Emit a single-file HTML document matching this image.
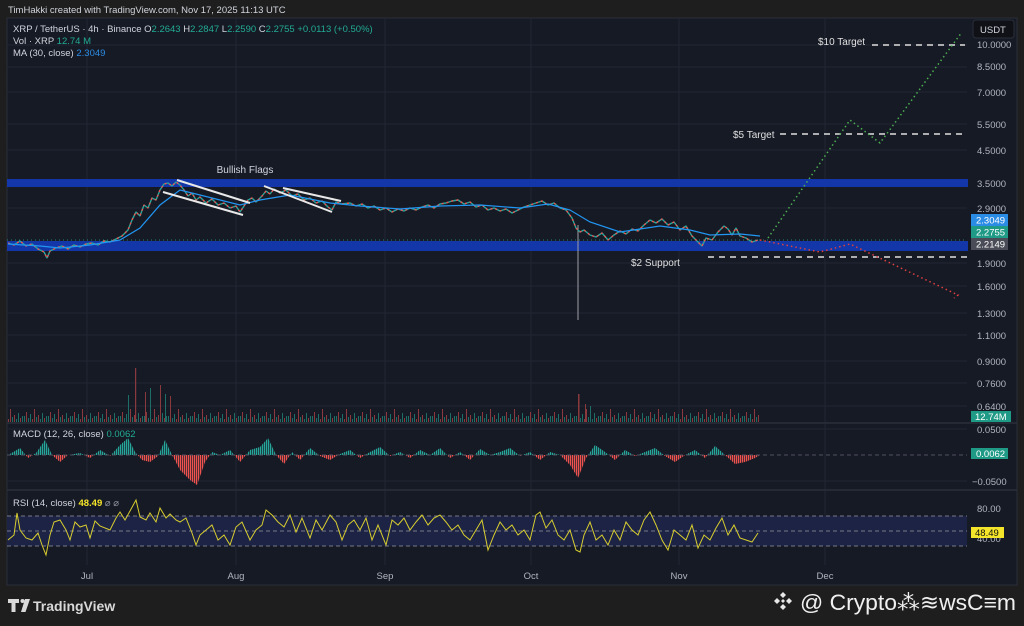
<!DOCTYPE html>
<html><head><meta charset="utf-8"><style>
html,body{margin:0;padding:0;background:#1e1e1e;width:1024px;height:626px;overflow:hidden}
svg{display:block;font-family:"Liberation Sans",sans-serif}
</style></head><body>
<svg width="1024" height="626" viewBox="0 0 1024 626" xmlns="http://www.w3.org/2000/svg">
<defs>
<pattern id="vp" x="0" y="404" width="24" height="18" patternUnits="userSpaceOnUse">
<rect x="0" y="12" width="1" height="6" fill="#1d6e66"/><rect x="2" y="8" width="1" height="10" fill="#8a3a3c"/><rect x="4" y="14" width="1" height="4" fill="#1d6e66"/><rect x="6" y="10" width="1" height="8" fill="#1d6e66"/><rect x="8" y="15" width="1" height="3" fill="#8a3a3c"/><rect x="10" y="5" width="1" height="13" fill="#8a3a3c"/><rect x="12" y="13" width="1" height="5" fill="#1d6e66"/><rect x="14" y="11" width="1" height="7" fill="#8a3a3c"/><rect x="16" y="15" width="1" height="3" fill="#1d6e66"/><rect x="18" y="9" width="1" height="9" fill="#1d6e66"/><rect x="20" y="14" width="1" height="4" fill="#8a3a3c"/><rect x="22" y="12" width="1" height="6" fill="#1d6e66"/>
</pattern>
<pattern id="stripe" x="0" y="0" width="2" height="10" patternUnits="userSpaceOnUse"><rect x="0" y="0" width="1.3" height="10" fill="#fff"/></pattern>
<mask id="sm"><rect x="0" y="420" width="1024" height="80" fill="url(#stripe)"/></mask>
<clipPath id="top"><rect x="0" y="420" width="1024" height="35"/></clipPath>
<clipPath id="bot"><rect x="0" y="455" width="1024" height="40"/></clipPath>
</defs>
<rect x="0" y="0" width="1024" height="626" fill="#1e1e1e"/>
<rect x="7" y="18" width="1010" height="567" fill="#161a25" stroke="#2a2e39" stroke-width="1"/>
<g stroke="#222633" stroke-width="1">
<line x1="87" y1="18" x2="87" y2="565"/><line x1="236" y1="18" x2="236" y2="565"/><line x1="385" y1="18" x2="385" y2="565"/><line x1="531" y1="18" x2="531" y2="565"/><line x1="679" y1="18" x2="679" y2="565"/><line x1="825" y1="18" x2="825" y2="565"/>
<line x1="7" y1="45" x2="967" y2="45"/><line x1="7" y1="67" x2="967" y2="67"/><line x1="7" y1="92" x2="967" y2="92"/><line x1="7" y1="124" x2="967" y2="124"/><line x1="7" y1="150" x2="967" y2="150"/><line x1="7" y1="183" x2="967" y2="183"/><line x1="7" y1="208" x2="967" y2="208"/><line x1="7" y1="263" x2="967" y2="263"/><line x1="7" y1="286" x2="967" y2="286"/><line x1="7" y1="313" x2="967" y2="313"/><line x1="7" y1="335" x2="967" y2="335"/><line x1="7" y1="361" x2="967" y2="361"/><line x1="7" y1="383" x2="967" y2="383"/><line x1="7" y1="406" x2="967" y2="406"/>
<line x1="7" y1="429" x2="967" y2="429"/><line x1="7" y1="481" x2="967" y2="481"/>
</g>
<g stroke="#2a2e39" stroke-width="1.5">
<line x1="7" y1="423" x2="1017" y2="423"/><line x1="7" y1="490" x2="1017" y2="490"/>
</g>
<rect x="7" y="179" width="961" height="8" fill="#1336a8"/>
<rect x="7" y="241" width="961" height="10" fill="#1336a8"/>
<line x1="7" y1="240" x2="967" y2="240" stroke="#26a69a" stroke-width="0.8" stroke-dasharray="1,3"/>
<rect x="8" y="404" width="752" height="18" fill="url(#vp)"/>
<g fill="#8a3a3c"><rect x="135" y="368" width="1.2" height="54"/><rect x="578" y="394" width="1.5" height="28"/><rect x="145" y="392" width="1" height="30"/><rect x="160" y="385" width="1" height="37"/><rect x="585" y="404" width="1" height="18"/><rect x="170" y="396" width="1" height="26"/></g>
<g fill="#1d6e66"><rect x="150" y="388" width="1" height="34"/><rect x="128" y="395" width="1" height="27"/><rect x="590" y="406" width="1" height="16"/><rect x="165" y="394" width="1" height="28"/></g>
<g mask="url(#sm)">
<polygon clip-path="url(#top)" fill="#26a69a" points="8,455 20,448 28,458 36,453 45,440 52,455 60,462 68,455 80,453 90,458 100,450 110,456 120,445 128,438 135,452 142,460 150,462 158,456 165,440 172,455 180,470 190,480 197,485 205,462 212,452 220,455 230,450 240,462 250,450 260,447 268,438 276,455 284,464 292,452 300,460 310,448 320,456 330,460 340,454 350,450 360,458 370,452 380,447 390,456 400,452 410,458 420,450 430,455 440,448 450,458 460,452 470,460 480,449 490,455 500,452 510,448 520,456 530,452 540,460 550,452 560,455 570,465 578,478 586,458 595,445 605,452 615,460 625,450 635,456 645,452 655,448 665,456 675,462 685,455 695,450 705,458 715,446 725,455 735,464 745,462 755,458 760,455"/>
<polygon clip-path="url(#bot)" fill="#ef5350" points="8,455 20,448 28,458 36,453 45,440 52,455 60,462 68,455 80,453 90,458 100,450 110,456 120,445 128,438 135,452 142,460 150,462 158,456 165,440 172,455 180,470 190,480 197,485 205,462 212,452 220,455 230,450 240,462 250,450 260,447 268,438 276,455 284,464 292,452 300,460 310,448 320,456 330,460 340,454 350,450 360,458 370,452 380,447 390,456 400,452 410,458 420,450 430,455 440,448 450,458 460,452 470,460 480,449 490,455 500,452 510,448 520,456 530,452 540,460 550,452 560,455 570,465 578,478 586,458 595,445 605,452 615,460 625,450 635,456 645,452 655,448 665,456 675,462 685,455 695,450 705,458 715,446 725,455 735,464 745,462 755,458 760,455"/>
</g>
<line x1="7" y1="455" x2="967" y2="455" stroke="#50535e" stroke-width="1" stroke-dasharray="4,3"/>
<rect x="7" y="516" width="960" height="30" fill="#1c2344"/>
<g stroke="#787b86" stroke-width="1" stroke-dasharray="4,3" fill="none">
<line x1="7" y1="516" x2="967" y2="516"/><line x1="7" y1="531" x2="967" y2="531"/><line x1="7" y1="546" x2="967" y2="546"/>
</g>
<polyline fill="none" stroke="#d8cd30" stroke-width="1" points="8,540 14,535 17,513 20,530 26,538 32,540 38,533 42,545 46,555 50,535 54,522 60,520 66,530 70,540 75,522 80,527 86,525 90,538 95,521 100,526 110,530 116,518 120,512 125,520 130,511 136,500 140,517 146,520 150,513 156,522 160,508 166,518 170,514 176,520 180,522 186,518 192,533 196,545 200,535 206,530 212,525 218,540 224,535 230,545 236,527 242,522 250,540 256,530 262,525 266,510 272,515 278,522 284,527 290,515 296,532 302,518 310,538 316,520 322,530 330,515 336,522 342,540 348,525 354,520 360,530 366,518 372,540 378,525 386,545 392,520 398,525 404,518 410,530 416,522 422,515 428,525 434,518 440,515 446,522 452,530 458,525 464,535 470,540 476,530 482,520 488,550 494,535 500,522 506,530 512,525 518,535 524,530 530,540 536,515 540,512 546,528 552,520 558,535 564,540 570,530 576,550 580,552 584,535 590,522 596,540 602,535 608,545 614,530 620,540 626,522 632,530 638,535 644,520 650,512 656,525 662,540 668,550 674,530 680,535 686,540 692,525 698,548 704,535 710,540 716,528 722,518 728,535 734,525 740,538 746,540 752,542 758,533"/>
<line x1="578" y1="225" x2="578" y2="320" stroke="#9ea0a8" stroke-width="1"/>
<g fill="none" stroke-width="1.4" stroke-linejoin="bevel">
<polyline stroke="#26a69a" points="8,243 14,245 20,241 26,246 32,244 38,249 44,252 47,258 50,251 56,248 62,246 68,249 74,245 80,247 86,244 92,243 98,245 104,241 110,242 116,239 122,236 128,230 132,220 136,212 140,216 144,205 148,208 152,198 156,200 160,190 164,184 168,183 172,186 176,182 180,185 184,190 188,196 192,193 196,200 200,197 206,203 212,199 218,205 224,203 230,208 236,206 240,212 244,206 248,200 252,198 256,202 262,196 266,191 270,194 274,189 280,193 286,190 292,196 298,194 304,200 310,198 316,203 322,201 328,207 332,210 336,202 342,204 350,203 356,206 362,204 368,208 374,206 380,210 386,208 392,212 398,209 404,211 410,208 416,210 422,207 428,205 434,208 440,204 446,203 452,201 458,200 464,204 470,202 476,207 482,205 488,210 494,208 500,211 506,209 512,213 518,210 524,207 530,205 536,203 542,201 548,205 554,203 560,208 566,210 572,218 576,228 580,232 584,230 590,235 596,237 602,233 608,240 614,235 620,231 626,234 632,229 638,231 644,225 650,220 656,223 662,219 668,225 674,222 680,230 686,226 692,236 698,242 702,246 706,238 712,240 718,232 724,226 728,229 732,235 736,228 740,236 746,238 752,242 758,240"/>
<polyline stroke="#ef5350" stroke-dasharray="2,3" points="8,243 14,245 20,241 26,246 32,244 38,249 44,252 47,258 50,251 56,248 62,246 68,249 74,245 80,247 86,244 92,243 98,245 104,241 110,242 116,239 122,236 128,230 132,220 136,212 140,216 144,205 148,208 152,198 156,200 160,190 164,184 168,183 172,186 176,182 180,185 184,190 188,196 192,193 196,200 200,197 206,203 212,199 218,205 224,203 230,208 236,206 240,212 244,206 248,200 252,198 256,202 262,196 266,191 270,194 274,189 280,193 286,190 292,196 298,194 304,200 310,198 316,203 322,201 328,207 332,210 336,202 342,204 350,203 356,206 362,204 368,208 374,206 380,210 386,208 392,212 398,209 404,211 410,208 416,210 422,207 428,205 434,208 440,204 446,203 452,201 458,200 464,204 470,202 476,207 482,205 488,210 494,208 500,211 506,209 512,213 518,210 524,207 530,205 536,203 542,201 548,205 554,203 560,208 566,210 572,218 576,228 580,232 584,230 590,235 596,237 602,233 608,240 614,235 620,231 626,234 632,229 638,231 644,225 650,220 656,223 662,219 668,225 674,222 680,230 686,226 692,236 698,242 702,246 706,238 712,240 718,232 724,226 728,229 732,235 736,228 740,236 746,238 752,242 758,240"/>
</g>
<polyline fill="none" stroke="#2196f3" stroke-width="1.2" points="8,244 40,246 60,248 90,245 120,240 140,228 160,205 180,190 200,195 240,205 260,200 290,195 330,203 360,206 400,209 440,206 480,205 520,208 548,204 570,210 590,222 620,232 660,226 690,230 710,235 740,234 760,236"/>
<g stroke="#e8e8e8" stroke-width="2">
<line x1="163" y1="192" x2="243" y2="215"/><line x1="177" y1="180" x2="250" y2="203"/>
<line x1="264" y1="186" x2="332" y2="212"/><line x1="283" y1="188" x2="341" y2="201"/>
</g>
<text x="245" y="173" fill="#d1d4dc" font-size="10" text-anchor="middle">Bullish Flags</text>
<g stroke="#e0e0e0" stroke-width="1.5" stroke-dasharray="6,5">
<line x1="872" y1="45" x2="965" y2="45"/><line x1="780" y1="134" x2="965" y2="134"/><line x1="708" y1="257" x2="967" y2="257"/>
</g>
<g fill="#e0e0e0" font-size="10">
<text x="818" y="45">$10 Target</text><text x="733" y="138">$5 Target</text><text x="631" y="266">$2 Support</text>
</g>
<polyline points="768,238 850,120 880,143 962,32" fill="none" stroke="#4caf50" stroke-width="1.5" stroke-dasharray="1.5,3"/>
<polyline points="760,240 820,252 850,244 958,295 954,298" fill="none" stroke="#e04040" stroke-width="1.5" stroke-dasharray="1.5,3"/>
<g fill="#b2b5be" font-size="9.5">
<text x="977" y="48">10.0000</text><text x="977" y="70">8.5000</text><text x="977" y="96">7.0000</text><text x="977" y="128">5.5000</text><text x="977" y="154">4.5000</text><text x="977" y="187">3.5000</text><text x="977" y="212">2.9000</text><text x="977" y="267">1.9000</text><text x="977" y="290">1.6000</text><text x="977" y="317">1.3000</text><text x="977" y="339">1.1000</text><text x="977" y="365">0.9000</text><text x="977" y="387">0.7600</text><text x="977" y="410">0.6400</text>
<text x="977" y="433">0.0500</text><text x="972" y="485">−0.0500</text><text x="977" y="512">80.00</text><text x="977" y="542">40.00</text>
</g>
<rect x="973" y="20" width="41" height="18" rx="3" fill="#0f1117" stroke="#2a2e39"/>
<text x="980" y="33" fill="#d1d4dc" font-size="9.5">USDT</text>
<rect x="971" y="214" width="37" height="12" fill="#2b8ce5"/><text x="976" y="223.5" fill="#fff" font-size="9.5">2.3049</text>
<rect x="971" y="226" width="37" height="12" fill="#1f9a86"/><text x="976" y="235.5" fill="#fff" font-size="9.5">2.2755</text>
<rect x="971" y="238" width="37" height="12" fill="#4a4d57"/><text x="976" y="247.5" fill="#fff" font-size="9.5">2.2149</text>
<rect x="971" y="411" width="40" height="11" fill="#1f9a86"/><text x="975" y="420" fill="#fff" font-size="9.5">12.74M</text>
<rect x="971" y="448" width="37" height="11" fill="#1f9a86"/><text x="976" y="457" fill="#fff" font-size="9.5">0.0062</text>
<rect x="971" y="527" width="33" height="11" fill="#f5e52a"/><text x="975" y="536" fill="#111" font-size="9.5">48.49</text>
<g fill="#b2b5be" font-size="9.5" text-anchor="middle">
<text x="87" y="579">Jul</text><text x="236" y="579">Aug</text><text x="385" y="579">Sep</text><text x="531" y="579">Oct</text><text x="679" y="579">Nov</text><text x="825" y="579">Dec</text>
</g>
<text x="8" y="13" fill="#d1d4dc" font-size="9.5">TimHakki created with TradingView.com, Nov 17, 2025 11:13 UTC</text>
<text x="13" y="32" font-size="9.5" fill="#d1d4dc">XRP / TetherUS · 4h · Binance  O<tspan fill="#22ab94">2.2643</tspan>  H<tspan fill="#22ab94">2.2847</tspan>  L<tspan fill="#22ab94">2.2590</tspan>  C<tspan fill="#22ab94">2.2755  +0.0113 (+0.50%)</tspan></text>
<text x="13" y="44" font-size="9.5" fill="#d1d4dc">Vol · XRP  <tspan fill="#22ab94">12.74 M</tspan></text>
<text x="13" y="56" font-size="9.5" fill="#d1d4dc">MA (30, close)  <tspan fill="#2b8ce5">2.3049</tspan></text>
<text x="13" y="437" font-size="9.5" fill="#d1d4dc">MACD (12, 26, close)  <tspan fill="#22ab94">0.0062</tspan></text>
<text x="13" y="506" font-size="9.5" fill="#d1d4dc">RSI (14, close)  <tspan fill="#f5e52a" font-weight="bold">48.49</tspan>  <tspan fill="#9598a1">⌀  ⌀</tspan></text>
<g fill="#d9d9d9">
<path d="M8 599h11v4h-3.5v9h-4v-9H8z"/><circle cx="22.5" cy="601" r="2"/><path d="M25 599h5l-4.5 13h-4.5z"/>
</g>
<text x="33" y="611" fill="#d9d9d9" font-size="14" font-weight="bold">TradingView</text>
<g fill="#e8e8e8" transform="translate(783,601)">
<path d="M0-9l3 3-3 3-3-3z"/><path d="M-6-3l3 3-3 3-3-3z"/><path d="M6-3l3 3-3 3-3-3z"/><path d="M0 3l3 3-3 3-3-3z"/><path d="M0-2l2 2-2 2-2-2z"/>
</g>
<text x="800" y="610" fill="#f0f0f0" font-size="22" textLength="216" lengthAdjust="spacingAndGlyphs">@ Crypto⁂≋wsC≡m</text>
</svg>
</body></html>
